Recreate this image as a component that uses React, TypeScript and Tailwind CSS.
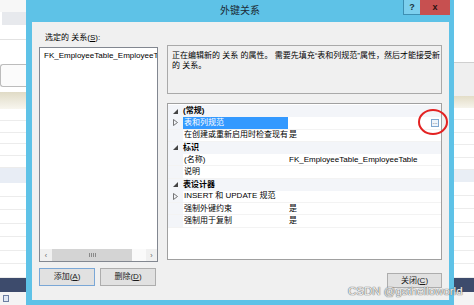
import React from "react";

type Row = {
  kind: "cat" | "prop";
  name: string;
  value?: string;
  expandable?: boolean;
  selected?: boolean;
  button?: boolean;
};

const rows: Row[] = [
  { kind: "cat", name: "(常规)" },
  { kind: "prop", name: "表和列规范", expandable: true, selected: true, button: true },
  { kind: "prop", name: "在创建或重新启用时检查现有", value: "是" },
  { kind: "cat", name: "标识" },
  { kind: "prop", name: "(名称)", value: "FK_EmployeeTable_EmployeeTable" },
  { kind: "prop", name: "说明" },
  { kind: "cat", name: "表设计器" },
  { kind: "prop", name: "INSERT 和 UPDATE 规范", expandable: true },
  { kind: "prop", name: "强制外键约束", value: "是" },
  { kind: "prop", name: "强制用于复制", value: "是" },
];

const font = "font-['Liberation_Sans','Noto_Sans_CJK_SC',sans-serif]";

const Lines = ({ h, count }: { h: string; count: number }) => (
  <div className={`flex flex-col ${h}`}>
    {Array.from({ length: count }).map((_, i) => (
      <div key={i} className="flex-1 border-b border-[#ececec] bg-white" />
    ))}
  </div>
);

const LeftBackdrop = () => (
  <div className="flex w-[26px] shrink-0 flex-col">
    <div className="h-[12px] bg-[#f7f7f7]" />
    <div className="h-[13px] bg-[#e7e9ed] ml-[2px]" />
    <div className="h-[15px] border-b border-[#e2e2e2] bg-white" />
    <div className="h-[24px] bg-white" />
    <div className="h-[23px] rounded-l-[3px] border-y border-l border-[#bcbcbc] bg-[#fbfbfb]" />
    <div className="h-[5px] bg-white" />
    <div className="h-[17px] bg-gradient-to-b from-[#e0dbc6] to-[#f8f6ef]" />
    <Lines h="h-[59px]" count={5} />
    <div className="h-[15px] bg-[#e8edf5]" />
    <Lines h="h-[95px]" count={7} />
    <div className="h-[14px] bg-[#3d4b6c]" />
    <div className="flex h-[13px] items-center bg-[#f4f4f4] pl-[3px]">
      <div className="h-[7px] w-[6px] border border-[#6d7fa3] bg-[#dfe7f3]" />
    </div>
  </div>
);

const RightBackdrop = () => (
  <div className="flex w-[20px] shrink-0 flex-col">
    <div className="h-[62px] bg-white" />
    <div className="h-[34px] border-t border-[#cfcfcf] bg-[#efefef]" />
    <div className="h-[12px] bg-gradient-to-b from-[#e3ddc7] to-[#f6f4ec]" />
    <Lines h="h-[62px]" count={5} />
    <div className="h-[12px] bg-[#e9eef5]" />
    <Lines h="h-[96px]" count={7} />
    <div className="h-[14px] bg-[#3d4b6c]" />
    <div className="h-[13px] bg-[#f4f4f4]" />
  </div>
);

const Btn = ({
  label,
  hot,
  focus,
  className = "",
}: {
  label: string;
  hot: string;
  focus?: boolean;
  className?: string;
}) => (
  <div
    className={`flex items-center justify-center border bg-[#e1e1e1] text-[8px] leading-none text-[#1a1a1a] ${
      focus ? "border-[#7aa7d6]" : "border-[#adadad]"
    } ${className}`}
  >
    {label}(<span className="underline">{hot}</span>)
  </div>
);

const GridRow = ({ row }: { row: Row }) => {
  if (row.kind === "cat") {
    return (
      <div className="flex h-[12.25px] items-center bg-[#f3f5f9]">
        <div className="flex w-[15px] shrink-0 justify-center">
          <svg width="5" height="5" viewBox="0 0 5 5">
            <path d="M5 0 L5 5 L0 5 Z" fill="#444" />
          </svg>
        </div>
        <div className="font-bold leading-none">{row.name}</div>
      </div>
    );
  }
  return (
    <div className="flex h-[12.25px] items-center border-b border-[#f3f3f3] bg-white">
      <div className="flex h-full w-[15px] shrink-0 items-center justify-center bg-[#f3f5f9]">
        {row.expandable && (
          <svg width="5" height="7" viewBox="0 0 5 7">
            <path d="M0.5 0.5 L4.5 3.5 L0.5 6.5 Z" fill="none" stroke="#555" strokeWidth="0.8" />
          </svg>
        )}
      </div>
      <div
        className={`flex h-full w-[105px] shrink-0 items-center overflow-hidden whitespace-nowrap pl-[1px] leading-none ${
          row.selected ? "bg-[#3399ff] text-white" : ""
        }`}
      >
        {row.name}
      </div>
      <div className="flex h-full flex-1 items-center justify-between overflow-hidden whitespace-nowrap pl-[1px] pr-[2px] leading-none">
        <span>{row.value ?? ""}</span>
        {row.button && (
          <div className="flex h-[8px] w-[8px] items-end justify-center border border-[#7fa6cf] bg-[#eef4fb] pb-[1px] text-[6px] leading-none text-[#222]">
            ...
          </div>
        )}
      </div>
    </div>
  );
};

export default function App() {
  return (
    <div className={`relative flex h-[305px] w-[474px] overflow-hidden bg-white ${font}`}>
      <LeftBackdrop />

      {/* dialog */}
      <div className="flex w-[428px] shrink-0 flex-col bg-[#5ec2e7]">
        <div className="flex h-[22px] shrink-0">
          <div className="w-[51px]" />
          <div className="flex-1 pt-[6px] text-center text-[10px] leading-none text-[#1c2b36]">
            外键关系
          </div>
          <div className="flex h-[15px] items-stretch pr-[4px]">
            <div className="flex w-[17px] items-center justify-center border-b border-l border-[#3d8fb3] bg-[#7ccfee] text-[9px] font-bold leading-none text-[#1a3340]">
              ?
            </div>
            <div className="flex w-[30px] items-center justify-center bg-[#c75050] text-[9px] font-bold leading-none text-[#2a1010]">
              x
            </div>
          </div>
        </div>

        <div className="mb-[5px] ml-[6px] mr-[5px] flex flex-1 bg-[#f0f0f0] px-[7px] text-[8px] text-black">
          {/* left column */}
          <div className="flex w-[119px] shrink-0 flex-col pt-[10px]">
            <div className="h-[11px] pl-[6px] leading-[11px]">
              选定的 关系(<span className="underline">S</span>):
            </div>
            <div className="mt-[4px] flex h-[215px] flex-col border border-[#828790] bg-white">
              <div className="flex-1 overflow-hidden whitespace-nowrap pl-[4px] pt-[3px] leading-[10px]">
                FK_EmployeeTable_EmployeeT
              </div>
              <div className="flex h-[12px] items-stretch bg-[#f0f0f0]">
                <div className="flex w-[12px] items-center justify-center text-[7px] leading-none text-[#606060]">
                  ‹
                </div>
                <div className="flex w-[80px] items-center justify-center bg-[#d4d4d4]">
                  <div className="flex gap-[1px]">
                    <div className="h-[4px] w-[1px] bg-[#8a8a8a]" />
                    <div className="h-[4px] w-[1px] bg-[#8a8a8a]" />
                    <div className="h-[4px] w-[1px] bg-[#8a8a8a]" />
                    <div className="h-[4px] w-[1px] bg-[#8a8a8a]" />
                  </div>
                </div>
                <div className="flex-1 bg-[#fafafa]" />
                <div className="flex w-[11px] items-center justify-center text-[7px] leading-none text-[#606060]">
                  ›
                </div>
              </div>
            </div>
            <div className="mt-[6px] flex gap-[5px]">
              <Btn label="添加" hot="A" focus className="h-[18px] w-[56px]" />
              <Btn label="删除" hot="D" className="h-[18px] w-[56px]" />
            </div>
          </div>

          {/* right column */}
          <div className="ml-[9px] flex w-[275px] shrink-0 flex-col pt-[23px]">
            <div className="h-[49px] border border-[#a9a9a9] bg-[#f0f0f0] pl-[4px] pt-[5px] leading-[10px]">
              <div className="whitespace-nowrap">
                正在编辑新的 关系 的属性。 需要先填充“表和列规范”属性，然后才能接受新
              </div>
              <div>的 关系。</div>
            </div>
            <div className="mt-[9px] flex h-[157px] flex-col border border-[#a0a0a0] bg-white pt-[1px]">
              {rows.map((row) => (
                <GridRow key={row.name} row={row} />
              ))}
            </div>
            <div className="mt-[13px] flex justify-end">
              <Btn label="关闭" hot="C" className="h-[15px] w-[55px]" />
            </div>
          </div>
        </div>
      </div>

      <RightBackdrop />

      {/* annotation circle */}
      <div className="absolute left-[418px] top-[109px] h-[26px] w-[30px] rounded-[50%] border-2 border-[#e32222]" />

      {/* watermark */}
      <div className="absolute left-[348px] top-[286px] whitespace-nowrap font-['Liberation_Sans',sans-serif] text-[11.5px] leading-none text-[#f2f2f2] [text-shadow:0_0_1px_#555,0_0_1px_#555]">
        CSDN @gsthelloworld
      </div>
    </div>
  );
}
